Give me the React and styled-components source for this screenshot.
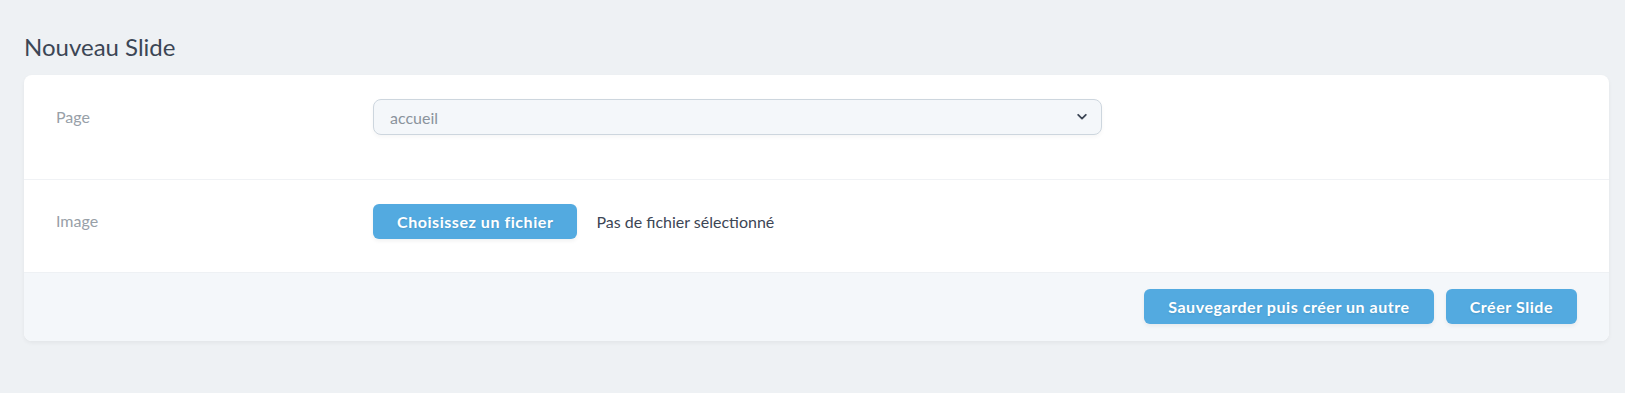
import styled, { createGlobalStyle } from 'styled-components';

const GlobalStyle = createGlobalStyle`
    * { box-sizing: border-box; }
    html, body {
        margin: 0;
        padding: 0;
        background-color: #eef1f4;
        font-family: "Lato", "Noto Sans", "Liberation Sans", sans-serif;
        color: #3c4655;
    }
`;

const Page = styled.div`
    min-height: 393px;
    padding: 30px 16px 0 24px;
`;

const Heading = styled.h1`
    margin: 0 0 12px 0;
    font-size: 24px;
    font-weight: 400;
    line-height: 33px;
    color: #3c4655;
`;

const Card = styled.div`
    background: #ffffff;
    border-radius: 8px;
    box-shadow: 0 2px 4px rgba(0, 0, 0, 0.05);
    overflow: hidden;
`;

const Row = styled.div`
    display: flex;
    align-items: flex-start;
    border-top: ${p => (p.$first ? 'none' : '1px solid #f0f2f5')};
    padding-top: 24px;
    padding-bottom: ${p => p.$bottom}px;
`;

const LabelCol = styled.div`
    width: 20%;
    padding: 0 32px;
`;

const Label = styled.label`
    display: inline-block;
    padding-top: ${p => p.$top}px;
    font-size: 16px;
    line-height: 20px;
    color: #98a0a8;
`;

const FieldCol = styled.div`
    width: 50%;
    padding: 0 32px;
    display: flex;
    align-items: center;
`;

const SelectBox = styled.div`
    position: relative;
    width: 100%;
    height: 36px;
    display: flex;
    align-items: center;
    padding: 0 16px;
    background: #f4f7fa;
    border: 1px solid #cdd6de;
    border-radius: 8px;
    box-shadow: 0 2px 4px rgba(0, 0, 0, 0.04);
    font-size: 16px;
    color: #8a939c;
`;

const Chevron = styled.svg`
    position: absolute;
    right: 14px;
    top: 50%;
    transform: translateY(-50%);
`;

const Button = styled.button`
    height: 35px;
    padding: 0 24px;
    border: none;
    border-radius: 6px;
    background: #53aae0;
    color: #ffffff;
    font-family: inherit;
    font-size: 16px;
    font-weight: 700;
    letter-spacing: 0.55px;
    text-shadow: 0 1px 2px rgba(0, 0, 0, 0.12);
    box-shadow: 0 2px 4px rgba(0, 0, 0, 0.06);
    cursor: pointer;
    white-space: nowrap;
`;

const FileName = styled.span`
    margin-left: 19px;
    font-size: 16px;
    color: #3c4655;
`;

const Footer = styled.div`
    display: flex;
    justify-content: flex-end;
    align-items: center;
    gap: 12px;
    background: #f4f7fa;
    border-top: 1px solid #eef1f4;
    padding: 16px 32px 17px;
`;

const App = () => {
    return (
        <>
            <GlobalStyle />
            <Page>
                <Heading>Nouveau Slide</Heading>
                <Card>
                    <Row $first $bottom={44}>
                        <LabelCol>
                            <Label $top={8}>Page</Label>
                        </LabelCol>
                        <FieldCol>
                            <SelectBox>
                                accueil
                                <Chevron width="10" height="7" viewBox="0 0 10 7">
                                    <path d="M1.2 1.3 L5 5.1 L8.8 1.3" fill="none" stroke="#3c4655" strokeWidth="1.8" strokeLinecap="round" strokeLinejoin="round" />
                                </Chevron>
                            </SelectBox>
                        </FieldCol>
                    </Row>
                    <Row $bottom={33}>
                        <LabelCol>
                            <Label $top={7}>Image</Label>
                        </LabelCol>
                        <FieldCol>
                            <Button>Choisissez un fichier</Button>
                            <FileName>Pas de fichier sélectionné</FileName>
                        </FieldCol>
                    </Row>
                    <Footer>
                        <Button>Sauvegarder puis créer un autre</Button>
                        <Button>Créer Slide</Button>
                    </Footer>
                </Card>
            </Page>
        </>
    );
};

export default App;
